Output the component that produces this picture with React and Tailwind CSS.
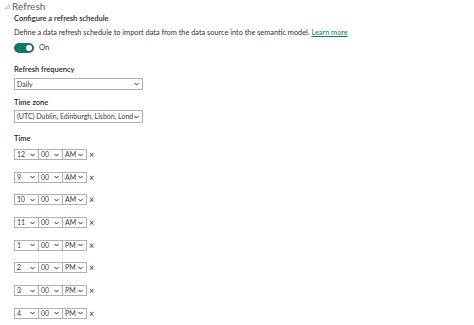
import React from "react";

const font = { fontFamily: "Lato, 'Open Sans', sans-serif" };

const times = [
  ["12", "AM"],
  ["9", "AM"],
  ["10", "AM"],
  ["11", "AM"],
  ["1", "PM"],
  ["2", "PM"],
  ["3", "PM"],
  ["4", "PM"],
];

function Chevron() {
  return (
    <svg width="5" height="4" viewBox="0 0 5 4" className="shrink-0">
      <path d="M0.5 1 L2.5 3 L4.5 1" fill="none" stroke="#323130" strokeWidth="1" />
    </svg>
  );
}

function FakeSelect({ value, className = "" }) {
  return (
    <div
      className={`flex items-center justify-between gap-[1px] border border-[#b3b0ad] bg-white pl-[2px] pr-[3px] text-[7px] text-[#3b3a39] ${className}`}
    >
      <span className="overflow-hidden whitespace-nowrap leading-none">{value}</span>
      <Chevron />
    </div>
  );
}

function Label({ children, className = "" }) {
  return <div className={`h-[9px] text-[7.5px] leading-[9px] font-semibold text-[#252423] ${className}`}>{children}</div>;
}

export default function App() {
  return (
    <div className="h-[325px] w-[474px] overflow-hidden bg-white" style={font}>
      <div className="flex h-[11px] items-center gap-[2px] pl-[5px] text-[#605e5c]">
        <span className="text-[6px] leading-none">◿</span>
        <span className="text-[10px] leading-none">Refresh</span>
      </div>
      <div className="pl-[14px]">
        <Label className="mt-[3px]">Configure a refresh schedule</Label>
        <div className="mt-[5px] h-[9px] text-[7.35px] leading-[9px] text-[#323130]">
          Define a data refresh schedule to import data from the data source into the semantic model.{" "}
          <span className="text-[#117865] underline">Learn more</span>
        </div>
        <div className="mt-[6px] flex h-[10px] items-center gap-[5px]">
          <div className="flex h-[10px] w-[20px] items-center justify-end rounded-full bg-[#117865] pr-[2px]">
            <div className="h-[6px] w-[6px] rounded-full bg-white" />
          </div>
          <span className="text-[7.5px] leading-none text-[#323130]">On</span>
        </div>
        <Label className="mt-[12px]">Refresh frequency</Label>
        <FakeSelect value="Daily" className="mt-[4px] h-[12px] w-[129px]" />
        <Label className="mt-[8px]">Time zone</Label>
        <FakeSelect value="(UTC) Dublin, Edinburgh, Lisbon, London" className="mt-[3px] h-[13px] w-[129px]" />
        <Label className="mt-[11px]">Time</Label>
        <div className="mt-[6px] flex flex-col gap-[11.7px]">
          {times.map(([h, ap], i) => (
            <div key={i} className="flex h-[11px] items-center">
              <FakeSelect value={h} className="h-[11px] w-[25px]" />
              <FakeSelect value="00" className="-ml-px h-[11px] w-[25px]" />
              <FakeSelect value={ap} className="-ml-px h-[11px] w-[25px]" />
              <span className="ml-[2px] text-[9px] leading-none text-[#323130]">×</span>
            </div>
          ))}
        </div>
      </div>
    </div>
  );
}
